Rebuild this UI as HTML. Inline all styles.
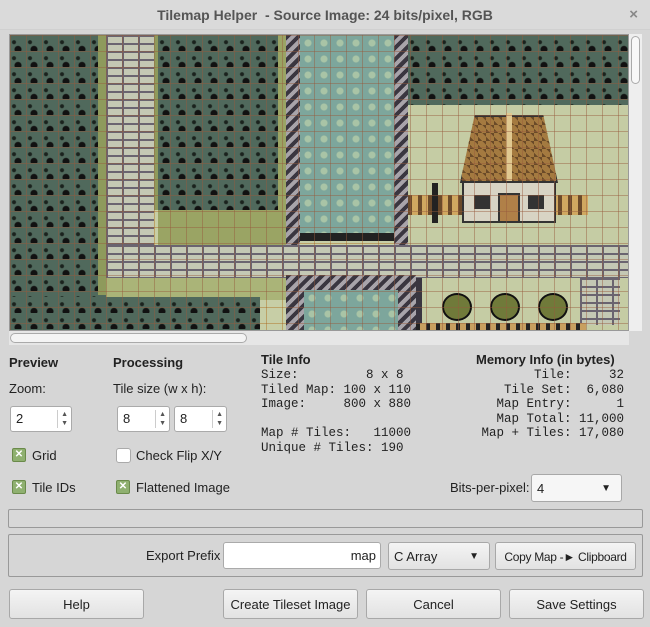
<!DOCTYPE html>
<html><head><style>
*{box-sizing:border-box}
body{margin:0;width:650px;height:627px;background:#d6d6d6;font-family:"Liberation Sans",sans-serif;font-size:13px;color:#222;position:relative;overflow:hidden}
.a{position:absolute}
.title{left:0;top:0;width:650px;height:30px;background:#dadada;text-align:center;line-height:30px;font-weight:bold;color:#555;font-size:14px;border-bottom:1px solid #d0d0d0}
.map{left:9px;top:34px;width:620px;height:297px;overflow:hidden;border:1px solid #999;background:#c8cca8}
.tree{background-color:#50695c;background-image:radial-gradient(circle at 50% 90%,#111 0 3px,transparent 4px),radial-gradient(circle at 25% 45%,#1a221d 0 1.5px,transparent 2.5px);background-size:16px 16px}
.brick{background-color:#c4c8b4;background-image:linear-gradient(#6a6470 0 2px,transparent 2px),linear-gradient(90deg,#6a6470 0 2px,transparent 2px);background-size:16px 8px,16px 16px}
.water{background-color:#7da69c;background-image:radial-gradient(circle,#a9c4a6 0 3px,transparent 4px);background-size:16px 16px}
.stone{background:repeating-linear-gradient(135deg,#3a3640 0 4px,#a8a4aa 4px 8px)}
.grass{background-color:#c7cea6;background-image:linear-gradient(rgba(230,230,120,.6) 1px,transparent 1px),linear-gradient(90deg,rgba(230,230,120,.6) 1px,transparent 1px);background-size:16px 16px}
.grid{background-image:linear-gradient(rgba(150,90,60,.45) 1px,transparent 1px),linear-gradient(90deg,rgba(150,90,60,.45) 1px,transparent 1px);background-size:16px 16px;pointer-events:none}
h4{margin:0;font-size:13px;font-weight:bold;color:#222;position:absolute}
.mono{font-family:"Liberation Mono","DejaVu Sans Mono",monospace;font-size:12.5px;line-height:14.5px;white-space:pre;color:#222}
.spin{background:#fff;border:1px solid #aaa;border-radius:3px;height:26px;line-height:24px;padding-left:5px}
.spin:after{content:"▲\A▼";white-space:pre;position:absolute;right:3px;top:3px;font-size:7px;line-height:9px;color:#555;border-left:1px solid #ccc;padding-left:3px}
.cb{width:14px;height:14px;border:1px solid #6a8a4a;background:#8fb070;border-radius:2px;color:#fff;font-size:10px;line-height:12px;text-align:center;font-weight:bold}
.cbe{width:15px;height:15px;border:1px solid #aaa;background:#fff;border-radius:3px}
.btn{background:linear-gradient(#f4f4f4,#e2e2e2);border:1px solid #a8a8a8;border-radius:3px;text-align:center;line-height:28px;color:#222;white-space:nowrap}
.frame{border:1px solid #999;border-radius:2px}
</style></head><body>
<div class="a title">Tilemap Helper&nbsp; - Source Image: 24 bits/pixel, RGB</div>
<div class="a" style="right:12px;top:6px;color:#888;font-size:15px;font-weight:bold">×</div>

<div class="a map">
 <div class="a grass" style="left:0;top:0;width:620px;height:297px"></div>
 <div class="a tree" style="left:0;top:0;width:98px;height:297px"></div>
 <div class="a" style="left:88px;top:0;width:12px;height:260px;background:#8e9a5c"></div>
 <div class="a brick" style="left:96px;top:0;width:48px;height:210px"></div>
 <div class="a" style="left:144px;top:0;width:6px;height:175px;background:#8e9a5c"></div>
 <div class="a tree" style="left:148px;top:0;width:128px;height:175px"></div>
 <div class="a" style="left:148px;top:175px;width:128px;height:35px;background:#9aa464"></div>
 <div class="a" style="left:268px;top:0;width:10px;height:210px;background:#9aa464"></div>
 <div class="a stone" style="left:276px;top:0;width:14px;height:210px"></div>
 <div class="a water" style="left:290px;top:0;width:94px;height:200px"></div>
 <div class="a" style="left:290px;top:198px;width:110px;height:8px;background:#222"></div>
 <div class="a stone" style="left:384px;top:0;width:14px;height:210px"></div>
 <div class="a tree" style="left:398px;top:0;width:222px;height:70px"></div>
 <div class="a" style="left:398px;top:70px;width:222px;height:140px;background:#c5cca4"></div>
 <div class="a" style="left:398px;top:160px;width:180px;height:20px;background:repeating-linear-gradient(90deg,#6a4a2a 0 4px,#d0a860 4px 10px)"></div>
 <div class="a" style="left:450px;top:80px;width:98px;height:68px;background-color:#a47a40;background-image:linear-gradient(45deg,#6a4a28 25%,transparent 25%,transparent 75%,#6a4a28 75%);background-size:8px 8px;border:2px solid #333;clip-path:polygon(15% 0,85% 0,100% 100%,0 100%)"></div>
 <div class="a" style="left:496px;top:78px;width:6px;height:70px;background:#e0c890"></div>
 <div class="a" style="left:452px;top:146px;width:94px;height:42px;background:#d8d4c4;border:2px solid #333"></div>
 <div class="a" style="left:464px;top:160px;width:16px;height:14px;background:#333"></div>
 <div class="a" style="left:518px;top:160px;width:16px;height:14px;background:#333"></div>
 <div class="a" style="left:488px;top:158px;width:22px;height:30px;background:#b08048;border:2px solid #333"></div>
 <div class="a" style="left:422px;top:148px;width:6px;height:40px;background:#222"></div>
 <!-- road -->
 <div class="a brick" style="left:96px;top:210px;width:524px;height:33px"></div>
 <div class="a" style="left:96px;top:243px;width:180px;height:22px;background:#aab478"></div>
 <div class="a tree" style="left:0;top:262px;width:250px;height:35px"></div>
 <div class="a stone" style="left:276px;top:240px;width:130px;height:57px"></div>
 <div class="a water" style="left:294px;top:255px;width:94px;height:42px"></div>
 <div class="a" style="left:406px;top:243px;width:214px;height:54px;background:#c5cca4"></div>
 <div class="a" style="left:406px;top:243px;width:6px;height:54px;background:#3a3640"></div>
 <div class="a" style="left:432px;top:258px;width:30px;height:28px;border-radius:50%;background:#707a3a;border:2px solid #111"></div>
 <div class="a" style="left:480px;top:258px;width:30px;height:28px;border-radius:50%;background:#707a3a;border:2px solid #111"></div>
 <div class="a" style="left:528px;top:258px;width:30px;height:28px;border-radius:50%;background:#707a3a;border:2px solid #111"></div>
 <div class="a brick" style="left:570px;top:243px;width:40px;height:47px"></div>
 <div class="a" style="left:406px;top:288px;width:170px;height:9px;background:repeating-linear-gradient(90deg,#222 0 4px,#c8a060 4px 10px)"></div>
 <div class="a grid" style="left:0;top:0;width:620px;height:297px"></div>
</div>
<div class="a" style="left:629px;top:34px;width:13px;height:297px;background:#eee"></div>
<div class="a" style="left:631px;top:36px;width:9px;height:48px;background:#f8f8f8;border:1px solid #aaa;border-radius:5px"></div>
<div class="a" style="left:9px;top:331px;width:620px;height:14px;background:#e6e6e6"></div>
<div class="a" style="left:10px;top:333px;width:237px;height:10px;background:#f4f4f4;border:1px solid #aaa;border-radius:5px"></div>

<h4 style="left:9px;top:355px">Preview</h4>
<h4 style="left:113px;top:355px">Processing</h4>
<div class="a" style="left:9px;top:381px">Zoom:</div>
<div class="a" style="left:113px;top:381px">Tile size (w x h):</div>
<div class="a spin" style="left:10px;top:406px;width:62px">2</div>
<div class="a spin" style="left:117px;top:406px;width:53px">8</div>
<div class="a spin" style="left:174px;top:406px;width:53px">8</div>
<div class="a cb" style="left:12px;top:448px">✕</div><div class="a" style="left:32px;top:448px">Grid</div>
<div class="a cbe" style="left:116px;top:448px"></div><div class="a" style="left:136px;top:448px">Check Flip X/Y</div>
<div class="a cb" style="left:12px;top:480px">✕</div><div class="a" style="left:32px;top:480px">Tile IDs</div>
<div class="a cb" style="left:116px;top:480px">✕</div><div class="a" style="left:136px;top:480px">Flattened Image</div>

<h4 style="left:261px;top:352px">Tile Info</h4>
<div class="a mono" style="left:261px;top:368px">Size:         8 x 8
Tiled Map: 100 x 110
Image:     800 x 880

Map # Tiles:   11000
Unique # Tiles: 190</div>
<h4 style="left:476px;top:352px">Memory Info (in bytes)</h4>
<div class="a mono" style="right:26px;top:368px;text-align:right">Tile:     32
Tile Set:  6,080
Map Entry:      1
Map Total: 11,000
Map + Tiles: 17,080</div>
<div class="a" style="left:450px;top:480px">Bits-per-pixel:</div>
<div class="a btn" style="left:531px;top:474px;width:91px;height:28px;text-align:left;padding-left:5px;background:#f6f6f6">4<span style="position:absolute;right:10px;font-size:10px">▼</span></div>

<div class="a frame" style="left:8px;top:509px;width:635px;height:19px;background:#d8d8d8"></div>
<div class="a frame" style="left:8px;top:534px;width:635px;height:43px"></div>
<div class="a" style="left:146px;top:548px">Export Prefix</div>
<div class="a" style="left:223px;top:542px;width:158px;height:27px;background:#fff;border:1px solid #aaa;border-radius:3px;text-align:right;padding-right:4px;line-height:25px">map</div>
<div class="a btn" style="left:388px;top:542px;width:102px;height:28px;text-align:left;padding-left:5px">C Array<span style="position:absolute;right:10px;font-size:10px">▼</span></div>
<div class="a btn" style="left:495px;top:542px;width:141px;height:28px;font-size:12px;letter-spacing:-0.3px">Copy Map -► Clipboard</div>

<div class="a btn" style="left:9px;top:589px;width:135px;height:30px;line-height:29px">Help</div>
<div class="a btn" style="left:223px;top:589px;width:135px;height:30px;line-height:29px">Create Tileset Image</div>
<div class="a btn" style="left:366px;top:589px;width:135px;height:30px;line-height:29px">Cancel</div>
<div class="a btn" style="left:509px;top:589px;width:135px;height:30px;line-height:29px">Save Settings</div>
</body></html>
